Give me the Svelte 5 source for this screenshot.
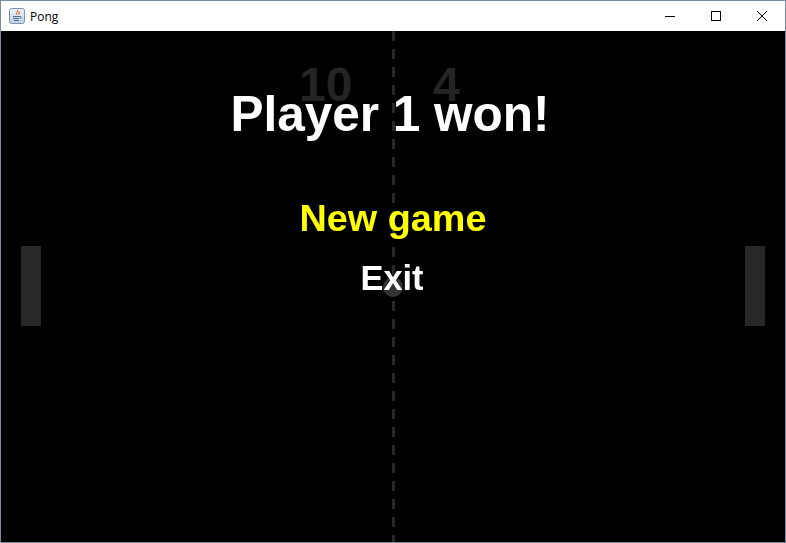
<script>
  let scoreLeft = $state(10);
  let scoreRight = $state(4);
  let winner = $state(1);
</script>

<div class="window">
  <header class="titlebar">
    <svg class="javaicon" width="16" height="16" viewBox="0 0 16 16">
      <defs>
        <linearGradient id="tile" x1="0" y1="0" x2="0" y2="1">
          <stop offset="0" stop-color="#eef4fa" />
          <stop offset="1" stop-color="#bfd0e3" />
        </linearGradient>
      </defs>
      <rect x="0.5" y="0.5" width="15" height="15" rx="2" fill="url(#tile)" stroke="#7d93ad" />
      <path d="M8.5 2c1.5 1.5-2 2.5-1 4.5M10.5 3.5c.5 1.2-1.5 2-.8 3" fill="none" stroke="#e0762c" stroke-width="1.2" />
      <path d="M4 8.5h7M4 10.5h6M5 12.5h5" stroke="#4d6f96" />
      <path d="M11 8.5c1.5 0 1.5 2 0 2" fill="none" stroke="#4d6f96" />
    </svg>
    <span class="title">Pong</span>
    <div class="controls">
      <div class="ctrl">
        <svg width="12" height="12" viewBox="0 0 12 12"><path d="M1 6.5h10" stroke="#000" /></svg>
      </div>
      <div class="ctrl">
        <svg width="12" height="12" viewBox="0 0 12 12"><rect x="1.5" y="1.5" width="9" height="9" fill="none" stroke="#000" /></svg>
      </div>
      <div class="ctrl">
        <svg width="12" height="12" viewBox="0 0 12 12"><path d="M1 1l10 10M11 1L1 11" stroke="#000" /></svg>
      </div>
    </div>
  </header>

  <main class="game">
    <div class="centerline"></div>
    <div class="score left">{scoreLeft}</div>
    <div class="score right">{scoreRight}</div>
    <div class="paddle p1"></div>
    <div class="paddle p2"></div>
    <div class="ball"></div>

    <div class="menu">
      <h1>Player {winner} won!</h1>
      <div class="item selected">New game</div>
      <div class="item exit">Exit</div>
    </div>
  </main>
</div>

<style>
  :global(body) {
    margin: 0;
    background: #000;
  }

  .window {
    width: 786px;
    height: 543px;
    box-sizing: border-box;
    border: 1px solid #7a8ba3;
    display: flex;
    flex-direction: column;
    overflow: hidden;
  }

  .titlebar {
    height: 30px;
    flex: none;
    background: #fff;
    display: flex;
    align-items: center;
    padding-left: 8px;
    gap: 5px;
  }

  .title {
    font-family: "Open Sans", "Noto Sans", sans-serif;
    font-size: 12px;
    color: #000;
  }

  .controls {
    margin-left: auto;
    display: flex;
  }

  .ctrl {
    width: 46px;
    height: 30px;
    display: flex;
    align-items: center;
    justify-content: center;
  }

  .game {
    flex: 1;
    position: relative;
    background: #000;
    font-family: "Liberation Sans", Arial, sans-serif;
    font-weight: bold;
  }

  .centerline {
    position: absolute;
    left: 391px;
    top: 0;
    bottom: 0;
    width: 3px;
    background: repeating-linear-gradient(to bottom, #282828 0 10px, transparent 10px 18px);
  }

  .score {
    position: absolute;
    top: 26px;
    font-size: 48px;
    line-height: 55px;
    color: #242424;
  }

  .score.left {
    left: 298px;
  }

  .score.right {
    left: 432px;
  }

  .paddle {
    position: absolute;
    top: 215px;
    width: 20px;
    height: 80px;
    background: #282828;
  }

  .p1 {
    left: 20px;
  }

  .p2 {
    left: 744px;
  }

  .ball {
    position: absolute;
    left: 382px;
    top: 246px;
    width: 20px;
    height: 20px;
    border-radius: 50%;
    background: #333;
  }

  .menu {
    position: absolute;
    inset: 0;
    display: flex;
    flex-direction: column;
    align-items: center;
    color: #fff;
    padding-top: 50px;
    will-change: transform;
  }

  h1 {
    margin: 0 0 41px;
    font-size: 49.5px;
    line-height: 66px;
    font-weight: bold;
    transform: translateX(-3px);
  }

  .item {
    font-size: 36px;
    line-height: 60px;
  }

  .selected {
    color: #ffff00;
    font-size: 37.8px;
  }

  .exit {
    font-size: 34.4px;
    transform: translateX(-1px);
  }
</style>
